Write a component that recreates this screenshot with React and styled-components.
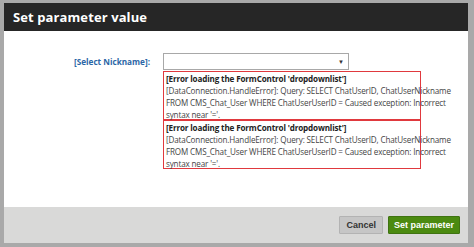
import styled, { createGlobalStyle } from "styled-components";

const GlobalStyle = createGlobalStyle`
  html, body {
    margin: 0;
    padding: 0;
    background: #a9a9a9;
    width: 474px;
    height: 247px;
    overflow: hidden;
  }
`;

const Page = styled.div`
  padding: 3px 6px 0 4px;
`;

const Dialog = styled.div`
  width: 464px;
  background: #fff;
  font-family: "Open Sans", sans-serif;
`;

const TitleBar = styled.div`
  height: 28px;
  background: #262626;
  display: flex;
  align-items: center;
  padding-left: 9px;
`;

const Title = styled.h1`
  margin: 0;
  color: #fff;
  font-size: 13px;
  font-weight: 700;
  letter-spacing: 0.1px;
`;

const Body = styled.div`
  height: 176px;
  padding-top: 22px;
  box-sizing: border-box;
`;

const FieldRow = styled.div`
  display: grid;
  grid-template-columns: 147px 258px;
  column-gap: 12px;
  align-items: start;
`;

const Label = styled.label`
  text-align: right;
  color: #2b66a6;
  font-size: 8.2px;
  font-weight: 700;
  line-height: 17px;
  padding-right: 1px;
`;

const Control = styled.div`
  display: flex;
  flex-direction: column;
`;

const Select = styled.div`
  width: 186px;
  height: 17px;
  box-sizing: border-box;
  border: 1px solid #a8a8a8;
  display: flex;
  align-items: center;
  justify-content: flex-end;
  padding-right: 4px;
  font-size: 6px;
  color: #333;
`;

const ErrorBox = styled.div`
  border: 1px solid #e0393e;
  padding: 1px 2px 0;
  font-size: 8.1px;
  line-height: 12px;
  letter-spacing: -0.15px;
  color: #444;
  height: 49px;
  box-sizing: border-box;
  margin-top: ${(p) => (p.$first ? "1px" : "0")};
`;

const Line = styled.div`
  white-space: nowrap;
  font-weight: ${(p) => (p.$bold ? 700 : 400)};
  color: ${(p) => (p.$bold ? "#222" : "#444")};
`;

const Footer = styled.div`
  height: 36px;
  background: #d9d9d8;
  display: flex;
  justify-content: flex-end;
  align-items: center;
  gap: 5px;
  padding-right: 8px;
`;

const Button = styled.button`
  height: 18px;
  padding: 0 ${(p) => (p.$primary ? "5px" : "6px")};
  border: 1px solid ${(p) => (p.$primary ? "#3f7311" : "#b3b3b3")};
  background: ${(p) => (p.$primary ? "#4b8a10" : "#c6c6c6")};
  color: ${(p) => (p.$primary ? "#fff" : "#333")};
  font-family: "Liberation Sans", Arial, sans-serif;
  font-weight: 700;
  font-size: 9px;
  border-radius: 1px;
`;

const lines = [
  "[DataConnection.HandleError]: Query: SELECT ChatUserID, ChatUserNickname",
  "FROM CMS_Chat_User WHERE ChatUserUserID = Caused exception: Incorrect",
  "syntax near '='.",
];

export default function App() {
  return (
    <>
      <GlobalStyle />
      <Page>
        <Dialog>
          <TitleBar>
            <Title>Set parameter value</Title>
          </TitleBar>
          <Body>
            <FieldRow>
              <Label>[Select Nickname]:</Label>
              <Control>
                <Select>▼</Select>
                {[0, 1].map((i) => (
                  <ErrorBox key={i} $first={i === 0}>
                    <Line $bold>[Error loading the FormControl 'dropdownlist']</Line>
                    {lines.map((l) => (
                      <Line key={l}>{l}</Line>
                    ))}
                  </ErrorBox>
                ))}
              </Control>
            </FieldRow>
          </Body>
          <Footer>
            <Button>Cancel</Button>
            <Button $primary>Set parameter</Button>
          </Footer>
        </Dialog>
      </Page>
    </>
  );
}
